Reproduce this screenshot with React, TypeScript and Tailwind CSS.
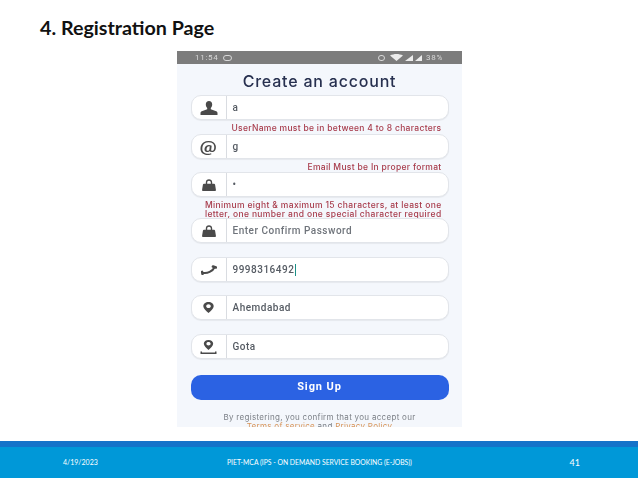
import React from "react";

const UserIcon = () => (
  <svg viewBox="0 0 18 14" className="w-[18px] h-[14px]" fill="#4a4a4a">
    <path d="M9 0c2 0 3.200 1.500 3.200 3.500 0 1.400-.6 2.700-1.400 3.500v1.300l5.400 2c.8.300 1.300.9 1.300 1.700v2H.5v-2c0-.8.500-1.400 1.300-1.700l5.400-2V7C6.400 6.200 5.800 4.900 5.800 3.500 5.800 1.500 7 0 9 0z" />
  </svg>
);

const LockIcon = () => (
  <svg viewBox="0 0 14 12" className="w-[14px] h-[12px]" fill="#4a4a4a">
    <path d="M3.800 5V3.400C3.800 1.400 5.200.2 7 .2s3.200 1.200 3.200 3.200V5H8.800V3.500C8.800 2.400 8.100 1.700 7 1.700s-1.800.7-1.800 1.800V5z" />
    <path d="M2 4.800h10c.6 0 1 .3 1.100.9l.8 5c.1.800-.3 1.300-1 1.300H1.100c-.7 0-1.100-.5-1-1.300l.8-5c.1-.6.500-.9 1.100-.9z" />
  </svg>
);

const PhoneIcon = () => (
  <svg viewBox="0 0 16 10" className="w-[16px] h-[10px]" fill="none" stroke="#4a4a4a" strokeLinecap="round">
    <path d="M1.500 7.800C6.500 8.800 11.500 6.500 13.800 2" strokeWidth="2" />
    <path d="M12 1.500l2.800 1" strokeWidth="2.600" />
    <path d="M1 6.800l.5 2.200" strokeWidth="2.400" />
  </svg>
);

const PinIcon = () => (
  <svg viewBox="0 0 11 11" className="w-[11px] h-[11px]" fill="#4a4a4a">
    <path fillRule="evenodd" d="M5.500 0C2.500 0 .3 1.700.3 4.200c0 2.500 3 4.700 5.200 6.800 2.200-2.100 5.200-4.300 5.200-6.800C10.700 1.700 8.500 0 5.500 0zm0 2.300c1.300 0 2.300.8 2.300 1.900S6.800 6.100 5.500 6.100 3.200 5.300 3.200 4.200s1-1.900 2.300-1.900z" />
  </svg>
);

const AreaIcon = () => (
  <svg viewBox="0 0 17 14" className="w-[17px] h-[14px]" fill="#4a4a4a">
    <path fillRule="evenodd" d="M8.500 0C5.800 0 3.800 1.500 3.800 3.700c0 2.200 2.700 4.200 4.700 6.200 2-2 4.700-4 4.700-6.200C13.200 1.500 11.200 0 8.500 0zm0 2.100c1.200 0 2.100.7 2.100 1.700S9.700 5.500 8.500 5.500 6.400 4.800 6.400 3.800s.9-1.700 2.100-1.700z" />
    <path d="M.5 11.500h1.500v1.100h13v-1.100h1.500V14H.5z" />
  </svg>
);

function Field({ icon, value, placeholder, cursor }: { icon: React.ReactNode; value?: string; placeholder?: string; cursor?: boolean }) {
  return (
    <div className="flex h-[25px] w-[258px] shrink-0 items-stretch rounded-[10px] border border-[#e2e5ea] bg-white shadow-[0_1px_1px_rgba(0,0,0,0.06)]">
      <div className="flex w-[35px] shrink-0 items-center justify-center border-r border-[#d9dce1]">{icon}</div>
      <div className="flex items-center pl-[6px] text-[10px] font-medium tracking-[0.5px] text-[#555b63]">
        {value ?? <span className="text-[#6f747b]">{placeholder}</span>}
        {cursor && <span className="ml-px h-[12px] w-px bg-[#1a8f86]" />}
      </div>
    </div>
  );
}

export default function App() {
  return (
    <div className="flex h-[478px] w-[638px] flex-col overflow-hidden bg-white font-['Roboto',sans-serif]">
      <h1 className="pl-[40px] pt-[14px] font-['Lato',sans-serif] text-[19.700px] font-bold leading-[28px] text-[#111111]">
        4. Registration Page
      </h1>

      <div className="flex flex-1 justify-center pt-[9px]">
        <div className="ml-[1px] flex h-[376px] w-[285px] flex-col overflow-hidden bg-[#f4f7fc] blur-[0.3px]">
          <div className="flex h-[13px] shrink-0 items-center justify-between bg-[#7c7c7c] pl-[18px] pr-[19px] text-[8px] tracking-[0.7px] text-[#d8d8d8]">
            <div className="flex items-center gap-[5px]">
              <span>11:54</span>
              <span className="h-[6px] w-[9px] rounded-full border border-[#d8d8d8]" />
            </div>
            <div className="flex items-center gap-[3px]">
              <span className="h-[6px] w-[7px] rounded-full border border-[#d8d8d8]" />
              <svg viewBox="0 0 32 7" className="ml-[2px] h-[7px] w-[32px]" fill="#ececec">
                <path d="M0 1.500C4-.5 9-.5 13 1.500L6.500 7zM15 7l8-6v6zM25 7l7-6v6z" />
              </svg>
              <span className="ml-[1px]">38%</span>
            </div>
          </div>

          <div className="flex flex-col items-center">
            <h2 className="h-[31px] pt-[9px] font-['Inter',sans-serif] text-[16px] font-medium leading-[17px] tracking-[0.8px] text-[#27304f]">Create an account</h2>

            <Field icon={<UserIcon />} value="a" />
            <p className="h-[14px] w-[258px] whitespace-nowrap pr-[7px] text-right font-['Inter',sans-serif] text-[8.500px] font-medium leading-[17px] tracking-[0.3px] text-[#a83c4c]">
              UserName must be in between 4 to 8 characters
            </p>
            <Field icon={<span className="scale-x-[1.35] text-[14px] font-bold leading-none text-[#4a4a4a]">@</span>} value="g" />
            <p className="h-[13px] w-[258px] whitespace-nowrap pr-[7px] text-right font-['Inter',sans-serif] text-[8.500px] font-medium leading-[17px] tracking-[0.3px] text-[#a83c4c]">
              Email Must be In proper format
            </p>
            <Field icon={<LockIcon />} value="•" />
            <p className="h-[21px] w-[258px] whitespace-nowrap pr-[7px] pt-[4px] text-right font-['Inter',sans-serif] text-[8.500px] font-medium leading-[8.500px] tracking-[0.36px] text-[#a83c4c]">
              Minimum eight &amp; maximum 15 characters, at least one
              <br />
              letter, one number and one special character required
            </p>
            <Field icon={<LockIcon />} placeholder="Enter Confirm Password" />
            <div className="h-[14px] shrink-0" />
            <Field icon={<PhoneIcon />} value="9998316492" cursor />
            <div className="h-[13px] shrink-0" />
            <Field icon={<PinIcon />} value="Ahemdabad" />
            <div className="h-[14px] shrink-0" />
            <Field icon={<AreaIcon />} value="Gota" />
            <button className="mt-[16px] h-[25px] w-[258px] shrink-0 rounded-[10px] bg-[#2b62e3] text-[11px] font-bold tracking-[0.9px] text-white">
              Sign Up
            </button>
            <p className="mt-[13px] whitespace-nowrap text-center font-['Inter',sans-serif] text-[8px] leading-[8.500px] tracking-[0.3px] text-[#7c8087]">
              By registering, you confirm that you accept our
              <br />
              <span className="text-[#d8955a]">Terms of service</span> and <span className="text-[#d8955a]">Privacy Policy</span>
            </p>
          </div>
        </div>
      </div>

      <div className="h-[6px] shrink-0 bg-[#1573c9]" />
      <div className="grid h-[31px] shrink-0 grid-cols-[164px_1fr_auto] items-center bg-[#0098d8] pl-[63px] pr-[58px] font-['Lato',sans-serif] text-white">
        <span className="text-[7px]">4/19/2023</span>
        <span className="text-[6.800px]">PIET-MCA (IPS - ON DEMAND SERVICE BOOKING (E-JOBS))</span>
        <span className="text-[9px]">41</span>
      </div>
    </div>
  );
}
